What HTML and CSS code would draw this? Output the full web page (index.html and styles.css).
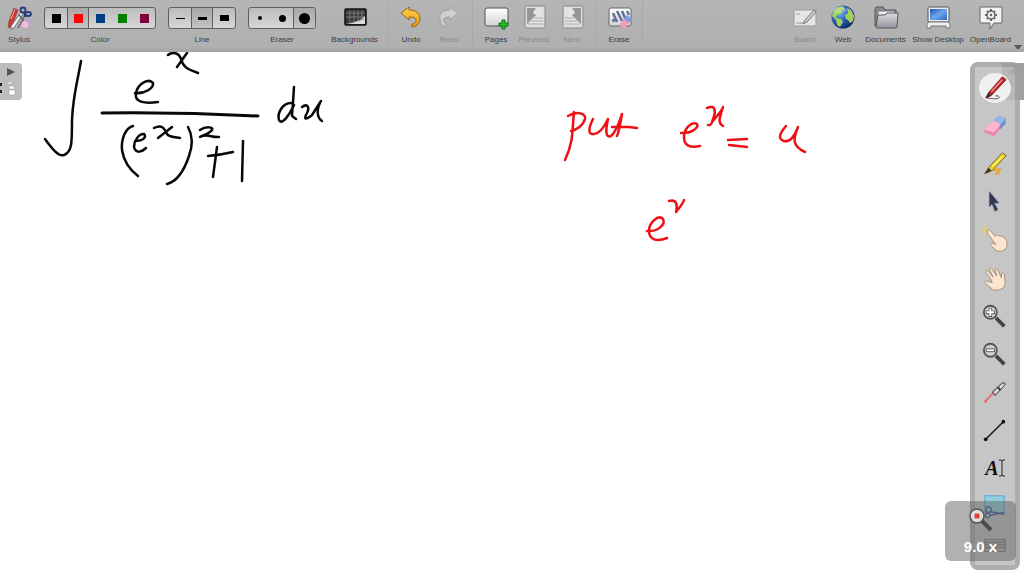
FILE: index.html
```html
<!DOCTYPE html>
<html lang="en">
<head>
<meta charset="utf-8">
<meta name="viewport" content="width=device-width, initial-scale=1">
<title>OpenBoard</title>
<link rel="stylesheet" href="styles.css">
</head>
<body>
<svg class="defs" width="0" height="0" aria-hidden="true">
  <defs>
    <linearGradient id="paper" x1="0" y1="0" x2="0" y2="1"><stop offset="0" stop-color="#fff"/><stop offset="1" stop-color="#d4d4d4"/></linearGradient>
    <linearGradient id="gold" x1="0" y1="0" x2="0" y2="1"><stop offset="0" stop-color="#ffd04a"/><stop offset="1" stop-color="#f09a10"/></linearGradient>
    <radialGradient id="globe" cx=".35" cy=".3" r=".75"><stop offset="0" stop-color="#7fb5f5"/><stop offset=".5" stop-color="#2a63bd"/><stop offset="1" stop-color="#0c2862"/></radialGradient>
    <linearGradient id="screen" x1="0" y1="0" x2="1" y2="1"><stop offset="0" stop-color="#1c55b4"/><stop offset=".5" stop-color="#6fa6ec"/><stop offset="1" stop-color="#2d68c4"/></linearGradient>
    <linearGradient id="folder" x1="0" y1="0" x2="0" y2="1"><stop offset="0" stop-color="#dcdde2"/><stop offset="1" stop-color="#94959d"/></linearGradient>
  </defs>
</svg>

<header class="toolbar">
  <div class="tools">
    <button class="tool" type="button">
      <svg class="icon" viewBox="0 0 28 28" aria-hidden="true">
        <path d="M17 19l4-5 5 3-4 7-5-1z" fill="#b9a0e0"/><path d="M17 19l2-3 5 3-2 5-5-1z" fill="#f2bdda"/>
        <path d="M4 17L9 4l4 2-5 13-3 5-2-1z" fill="#d03a33" stroke="#793030" stroke-width=".5"/>
        <path d="M6 15l4-10" stroke="#f2a7a0" stroke-width="1"/>
        <path d="M6 22L16 8l2 2L9 24l-3 1z" fill="#eee" stroke="#555" stroke-width=".8"/>
        <path d="M13 24L21 9M14 11l5 6" stroke="#666" stroke-width="1.500"/>
        <g fill="none" stroke="#263b80" stroke-width="1.800"><circle cx="18" cy="6" r="2.500"/><ellipse cx="23" cy="10" rx="3" ry="2"/><path d="M19 8l1 4 2-1"/></g>
      </svg>
      <span class="caption">Stylus</span>
    </button>

    <fieldset class="choice" aria-labelledby="color-caption">
      <div class="cells">
        <input class="cell black" type="radio" name="color" aria-label="Black">
        <input class="cell red" type="radio" name="color" aria-label="Red" checked>
        <input class="cell blue" type="radio" name="color" aria-label="Blue">
        <input class="cell green" type="radio" name="color" aria-label="Green">
        <input class="cell maroon" type="radio" name="color" aria-label="Maroon">
      </div>
      <span class="caption" id="color-caption">Color</span>
    </fieldset>

    <fieldset class="choice" aria-labelledby="line-caption">
      <div class="cells">
        <input class="cell line-thin" type="radio" name="line" aria-label="Thin">
        <input class="cell line-medium" type="radio" name="line" aria-label="Medium" checked>
        <input class="cell line-thick" type="radio" name="line" aria-label="Thick">
      </div>
      <span class="caption" id="line-caption">Line</span>
    </fieldset>

    <fieldset class="choice" aria-labelledby="eraser-caption">
      <div class="cells">
        <input class="cell dot-small" type="radio" name="eraser" aria-label="Small">
        <input class="cell dot-medium" type="radio" name="eraser" aria-label="Medium">
        <input class="cell dot-large" type="radio" name="eraser" aria-label="Large" checked>
      </div>
      <span class="caption" id="eraser-caption">Eraser</span>
    </fieldset>

    <div class="section">
      <button class="tool tool-mid" type="button">
        <svg class="icon" viewBox="0 0 28 28" aria-hidden="true">
          <rect x="4" y="5" width="21" height="16" rx="1" fill="#3a3a3a" stroke="#111" stroke-width="1.500"/>
          <path d="M5 9h19M5 13h19M9 6v14M13 6v14M17 6v14M21 6v14" stroke="#858585" stroke-width=".8"/>
          <path d="M5 20c8-1 14-3 19-8v8z" fill="#ddd"/><path d="M10 19l13-4" stroke="#888"/>
        </svg>
        <span class="caption">Backgrounds</span>
      </button>
    </div>

    <div class="section">
      <button class="tool" type="button">
        <svg class="icon" viewBox="0 0 28 28" aria-hidden="true">
          <path d="M4 9l8-6v3c8 0 11 4 11 9-1 5-4 8-8 8v-3c4 0 5-4 3-6-1-1-3-1-6-1v3z" fill="url(#gold)" stroke="#8a651b" stroke-width="1" stroke-linejoin="round"/>
        </svg>
        <span class="caption">Undo</span>
      </button>
      <button class="tool" type="button" disabled>
        <svg class="icon" viewBox="0 0 28 28" aria-hidden="true">
          <path d="M23 9l-8-6v3c-8 0-11 4-10 9 1 5 3 7 6 8v-3c-2-1-3-4-2-5 1-2 3-2 6-2v3z" fill="#d0d0d0" stroke="#a0a0a0" stroke-linejoin="round"/>
        </svg>
        <span class="caption">Redo</span>
      </button>
    </div>

    <div class="section">
      <button class="tool" type="button">
        <svg class="icon" viewBox="0 0 28 28" aria-hidden="true">
          <rect x="3" y="4" width="23" height="18" rx="2" fill="url(#paper)" stroke="#555"/>
          <path d="M20 16h3v3h3v3h-3v3h-3v-3h-3v-3h3z" fill="#28bd28" stroke="#08720c"/>
        </svg>
        <span class="caption">Pages</span>
      </button>
      <button class="tool" type="button" disabled>
        <svg class="icon" viewBox="0 0 28 28" aria-hidden="true">
          <rect x="5" y="2" width="20" height="22" rx="1.500" fill="#ddd" stroke="#888"/>
          <path d="M7 4h9l-3 5 3 2-9 9z" fill="#969696"/><path d="M16 4l-3 5 4 2L7 21h16V4z" fill="#e3e3e3"/><path d="M14 14h9M11 17h12M8 20h15" stroke="#aaa"/>
        </svg>
        <span class="caption">Previous</span>
      </button>
      <button class="tool" type="button" disabled>
        <svg class="icon" viewBox="0 0 28 28" aria-hidden="true">
          <rect x="5" y="2" width="20" height="22" rx="1.500" fill="#ddd" stroke="#888"/>
          <path d="M23 4h-9l3 5-3 2 9 9z" fill="#969696"/><path d="M14 4l3 5-4 2 10 10H7V4z" fill="#e3e3e3"/><path d="M7 14h9M7 17h12M7 20h15" stroke="#aaa"/>
        </svg>
        <span class="caption">Next</span>
      </button>
    </div>

    <div class="section">
      <button class="tool" type="button">
        <svg class="icon" viewBox="0 0 28 28" aria-hidden="true">
          <rect x="4" y="4" width="22" height="18" rx="2" fill="url(#paper)" stroke="#666"/>
          <path d="M8 9l4 9M12 7l5 10M17 7l3 7M22 7l2 4M8 15l1 3" stroke="#5f7196" stroke-width="2.500"/>
          <path d="M18 16l4-5 5 4-4 5z" fill="#7d9de0"/><path d="M15 20l4-5 5 4-4 5-4-1z" fill="#f39abc"/>
        </svg>
        <span class="caption">Erase</span>
      </button>
    </div>
  </div>

  <div class="tools tools-end">
    <button class="tool" type="button" disabled>
      <svg class="icon" viewBox="0 0 28 28" aria-hidden="true">
        <rect x="3" y="6" width="22" height="16" rx="1" fill="#e5e5e5" stroke="#999"/>
        <path d="M12 20l2-4 9-10 2 2-9 10z" fill="#ccc" stroke="#777"/><path d="M5 10h4M5 19h8" stroke="#999"/>
      </svg>
      <span class="caption">Board</span>
    </button>
    <button class="tool" type="button">
      <svg class="icon" viewBox="0 0 28 28" aria-hidden="true">
        <circle cx="14" cy="13" r="11.500" fill="url(#globe)"/>
        <path d="M4 8c2-3 5-5 9-6l3 3-4 2 0 3-4 1-1 3 5 1 2 3-3 5-3-2-1-5-4-4zM18 4l4 2 3 6-1 5-3 2-2-3-2-1-1-4 3-2z" fill="#a4cf5a"/>
        <ellipse cx="11" cy="6" rx="7" ry="3" fill="#fff" opacity=".25"/>
      </svg>
      <span class="caption">Web</span>
    </button>
    <button class="tool tool-mid" type="button">
      <svg class="icon" viewBox="0 0 28 28" aria-hidden="true">
        <path d="M3 22V5l1-2h7l2 3h11v15z" fill="#88898f" stroke="#55565b"/>
        <path d="M6 7h17v5H6z" fill="#eee" stroke="#777"/>
        <path d="M4 23l2-12h7l2-2h11l-1 14-1 1H5z" fill="url(#folder)" stroke="#55565b" stroke-linejoin="round"/>
      </svg>
      <span class="caption">Documents</span>
    </button>
    <button class="tool tool-wide" type="button">
      <svg class="icon" viewBox="0 0 28 28" aria-hidden="true">
        <rect x="4" y="3" width="21" height="15" rx="1" fill="#eee" stroke="#555"/>
        <rect x="6" y="5" width="17" height="11" fill="url(#screen)"/>
        <path d="M3 24v-4l2-2h19l2 2v4h-4v-2H7v2z" fill="#eee" stroke="#777"/>
      </svg>
      <span class="caption">Show Desktop</span>
    </button>
    <button class="tool tool-mid" type="button">
      <svg class="icon" viewBox="0 0 28 28" aria-hidden="true">
        <path d="M4 3h20q1 0 1 1v14q0 1-1 1h-7l-4 6v-6H4q-1 0-1-1V4q0-1 1-1z" fill="#f2f2f2" stroke="#666"/>
        <path d="M14 5v12M8 11h12M10 7l8 8M10 15l8-8" stroke="#666" stroke-width="2"/>
        <circle cx="14" cy="11" r="4" fill="#eee" stroke="#666" stroke-width="1.500"/><circle cx="14" cy="11" r="1.200" fill="#666"/>
      </svg>
      <span class="caption">OpenBoard</span>
    </button>
    <button class="more" type="button" aria-label="More"></button>
  </div>
</header>

<main class="board">
  <svg class="ink" viewBox="0 52 1024 524" preserveAspectRatio="xMinYMin meet" role="img" aria-label="Handwritten integral of e to the x over e to the x squared plus one, substitution e to the x equals u">
    <g class="pen-black">
      <path d="M81 61C77 84 73 96 72 120C72 143 72 152 64 155C58 157 51 147 45 139"/>
      <path d="M135 93C145 94 154 88 153 83C149 78 138 83 136 93C134 102 144 104 158 102"/>
      <path d="M168 55C173 51 179 53 181 59C183 67 187 69 198 73M187 53L177 67"/>
      <path class="bar" d="M102 113Q180 112 258 116"/>
      <path d="M133 126C125 128 121 140 122 150C124 163 130 170 138 176"/>
      <path d="M135 141C143 141 147 137 144 134C139 133 134 141 134 147C136 154 142 152 146 148"/>
      <path d="M154 128C162 124 164 128 167 134C169 137 173 137 180 138M172 127L158 138"/>
      <path d="M188 127C193 136 193 145 189 156C185 168 179 181 167 184"/>
      <path d="M200 130C206 126 214 127 212 130C209 134 204 135 200 137C207 133 212 138 219 137"/>
      <path d="M217 147Q215 162 213 177M208 156Q220 155 233 152M243 141L242 181"/>
      <path d="M291 103C282 103 277 114 279 120C282 126 290 114 294 105M294 87Q293 103 292 116L296 119"/>
      <path d="M302 107C307 103 310 107 307 113C303 120 306 120 312 115L321 101C316 110 317 118 322 121"/>
    </g>
    <g class="pen-red">
      <path d="M574 112C572 130 574 141 565 160M568 116C578 110 586 114 585 119C583 126 576 130 571 131"/>
      <path d="M593 119C588 129 588 135 594 134C602 133 607 121 608 119C605 132 606 138 611 136C617 131 621 117 622 114C620 126 619 132 617 136M612 127Q625 126 637 128"/>
      <path d="M681 133C692 134 699 127 697 124C691 121 684 129 684 137C684 146 690 148 700 146"/>
      <path d="M707 108C716 104 716 112 713 119C712 124 710 126 708 125M712 122C718 115 723 109 723 107C720 117 717 123 723 126"/>
      <path d="M728 140L747 139M729 145L747 147"/>
      <path d="M786 126C780 133 777 139 784 141C792 143 796 132 798 127C793 139 792 146 805 152"/>
      <path d="M647 231C657 232 666 225 663 219C658 214 649 223 649 231C649 240 657 242 667 238"/>
      <path d="M669 201C676 199 678 204 676 212C679 208 683 204 684 200"/>
    </g>
  </svg>

  <button class="drawer drawer-left" type="button" aria-label="Open page panel">
    <svg class="drawer-icon" viewBox="0 0 22 37" aria-hidden="true">
      <path d="M7 5l8 4-8 4z" fill="#555"/><path d="M0 20h2v3H0zM0 27h2v3H0z" fill="#222"/>
      <path d="M8 19h4v2H8zM9 23h5v3H9zM9 27h6v5H9z" fill="#fff" stroke="#999" stroke-width=".5"/>
    </svg>
  </button>
  <button class="drawer drawer-right" type="button" aria-label="Open library panel">
    <svg class="drawer-icon" viewBox="0 0 22 37" aria-hidden="true"><path d="M13 5L6 9l7 4z" fill="#555"/><path d="M6 18h4v3H6z" fill="#3b5d9a"/><path d="M6 24h4v4H6z" fill="#d0a938"/></svg>
  </button>

  <nav class="palette" aria-label="Drawing tools">
    <button class="pick pick-on" type="button" aria-label="Pen">
      <svg class="icon" viewBox="0 0 28 28" aria-hidden="true"><path d="M7 19L22 2l4 3-16 17-5 3z" fill="#c92328" stroke="#6b2020"/><path d="M10 18L22 5" stroke="#f69b96" stroke-width="1.500"/><path d="M3 25l4-6 3 3z" fill="#333"/><path d="M6 25c8 1 15 1 12-2-2-2-5 0-2 0" fill="none" stroke="#555"/></svg>
    </button>
    <button class="pick" type="button" aria-label="Eraser">
      <svg class="icon" viewBox="0 0 28 28" aria-hidden="true"><path d="M12 8l6-5 8 3-1 6-6 6-7-5z" fill="#6c8fd0"/><path d="M12 8l6-5 8 3-6 6z" fill="#93b5e9"/><path d="M2 18l10-10 8 4-1 6-6 7-10-4z" fill="#ea83b0"/><path d="M2 18l10-10 8 4-7 9z" fill="#ffb4d0"/></svg>
    </button>
    <button class="pick" type="button" aria-label="Highlighter">
      <svg class="icon" viewBox="0 0 28 28" aria-hidden="true"><path d="M8 20h11l-3 4h3" fill="none" stroke="#e3aa42" stroke-width="3"/><path d="M7 18L22 2l4 3-15 16-6 3z" fill="#ebce23" stroke="#74631c"/><path d="M11 17L23 5" stroke="#fff171" stroke-width="1.500"/><path d="M2 25l5-7 3 3z" fill="#333"/></svg>
    </button>
    <button class="pick" type="button" aria-label="Select">
      <svg class="icon" viewBox="0 0 28 28" aria-hidden="true"><path d="M8 3l10 12h-5l4 7-3 2-3-8-3 3z" fill="#30384f" stroke="#586078"/></svg>
    </button>
    <button class="pick" type="button" aria-label="Interact">
      <svg class="icon" viewBox="0 0 28 28" aria-hidden="true"><path d="M3-3v11M-3 3h11M-1-1l8 8M7-1l-8 8" stroke="#dfd176"/><path d="M6 4c2-2 3 0 8 6 2-2 4-1 5 0 2-1 4 0 5 2 3 0 4 9 2 11l-4 3h-6c-2-3-8-6-7-8 1-2 4 0 6 1L6 7q-1-2 0-3z" fill="#fbe5cf" stroke="#a18d77"/></svg>
    </button>
    <button class="pick" type="button" aria-label="Scroll page">
      <svg class="icon" viewBox="0 0 28 28" aria-hidden="true"><path d="M9 14L4 8q0-3 3-1l5 6-4-8q1-3 3 0l5 7-2-7q1-2 3 0l4 9 0-5q2-2 3 1l1 10-2 5-5 2h-6l-8-7q-2-3 1-3l6 2z" fill="#fbe5cf" stroke="#a18d77"/></svg>
    </button>
    <button class="pick" type="button" aria-label="Zoom in">
      <svg class="icon" viewBox="0 0 28 28" aria-hidden="true"><path d="M15 16l9 9" stroke="#444" stroke-width="4"/><circle cx="9" cy="10" r="7" fill="#e0e0e0" stroke="#555" stroke-width="2"/><path d="M9 5v10M4 10h10" stroke="#555" stroke-width="4"/><path d="M9 6v8M5 10h8" stroke="#fff" stroke-width="2"/></svg>
    </button>
    <button class="pick" type="button" aria-label="Zoom out">
      <svg class="icon" viewBox="0 0 28 28" aria-hidden="true"><path d="M15 16l9 9" stroke="#444" stroke-width="4"/><circle cx="9" cy="10" r="7" fill="#d0d0d0" stroke="#555" stroke-width="2"/><path d="M4 10h10" stroke="#555" stroke-width="4"/><path d="M5 10h8" stroke="#fff" stroke-width="2"/></svg>
    </button>
    <button class="pick" type="button" aria-label="Laser pointer">
      <svg class="icon" viewBox="0 0 28 28" aria-hidden="true"><path d="M3 25l9-10" stroke="#e66d69" stroke-width="2"/><circle cx="4" cy="24" r="1.500" fill="#e66d69"/><path d="M11 14L22 4q3-1 3 2L14 18z" fill="#aaa" stroke="#444"/><path d="M14 15l9-9" stroke="#eee" stroke-width="1.500"/><path d="M17 9l3 3" stroke="#333" stroke-width="2"/></svg>
    </button>
    <button class="pick" type="button" aria-label="Line">
      <svg class="icon" viewBox="0 0 28 28" aria-hidden="true"><path d="M4 24L23 5" stroke="#111" stroke-width="1.500"/><circle cx="4" cy="24" r="2" fill="#111"/><circle cx="23" cy="5" r="2" fill="#111"/></svg>
    </button>
    <button class="pick" type="button" aria-label="Write text">
      <span class="letter">A</span><svg class="caret" viewBox="0 0 6 18" aria-hidden="true"><path d="M0 1h2l1 1 1-1h2M3 2v14M0 17h2l1-1 1 1h2" fill="none" stroke="#222"/></svg>
    </button>
    <button class="pick" type="button" aria-label="Capture">
      <svg class="icon" viewBox="0 0 28 28" aria-hidden="true"><rect x="3" y="3" width="21" height="18" fill="#91cfdd" stroke="#258dd2" stroke-dasharray="2 1"/><g fill="none" stroke="#385d9b" stroke-width="1.500"><circle cx="7" cy="18" r="3"/><circle cx="6" cy="24" r="2.500"/><path d="M9 20l15 3M9 24l15-3"/></g></svg>
    </button>
    <button class="pick" type="button" aria-label="Virtual keyboard">
      <svg class="icon" viewBox="0 0 28 28" aria-hidden="true"><rect x="3" y="9" width="22" height="13" fill="#b8b8b8" stroke="#777"/><path d="M3 12h22M3 15h22M3 18h22" stroke="#666"/></svg>
    </button>
  </nav>

  <output class="zoom">
    <svg class="icon" viewBox="0 0 28 28" aria-hidden="true"><path d="M15 16l9 9" stroke="#4b4b4b" stroke-width="4"/><circle cx="10" cy="11" r="7" fill="#ddd" stroke="#555" stroke-width="1.500"/><path d="M8 9l4 4M12 9l-4 4" stroke="#e83b34" stroke-width="2.500"/></svg>
    <span>9.0 x</span>
  </output>
</main>
</body>
</html>
```

FILE: styles.css
```css
* {
  box-sizing: border-box;
}

body {
  display: flex;
  flex-direction: column;
  min-height: 100vh;
  margin: 0;
  background: #fff;
  color: #3c3c3c;
  font: 8px/12px "Liberation Sans", Arial, sans-serif;
}

button {
  margin: 0;
  padding: 0;
  border: 0;
  background: none;
  color: inherit;
  font: inherit;
}

.defs {
  position: absolute;
}

.toolbar {
  display: flex;
  justify-content: space-between;
  height: 52px;
  background: linear-gradient(#b5b5b5, #b0b0b0 90%, #a3a3a3);
}

.tools {
  display: flex;
}

.tools-end {
  padding-right: 2px;
}

.tool {
  display: flex;
  flex-direction: column;
  align-items: center;
  width: 38px;
  padding-top: 4px;
}

.tool-mid {
  width: 47px;
}

.tool-wide {
  width: 58px;
}

.tool:disabled {
  color: #898989;
}

.icon {
  display: block;
  flex: none;
  width: 28px;
  height: 28px;
  overflow: visible;
}

.caption {
  margin-top: 2px;
  white-space: nowrap;
}

.choice {
  display: flex;
  flex-direction: column;
  align-items: center;
  min-width: 0;
  margin: 0 6px;
  padding: 7px 0 0;
  border: 0;
}

.choice .caption {
  margin-top: 5px;
}

.cells {
  display: flex;
  overflow: hidden;
  border: 1px solid #5f5f5f;
  border-radius: 3px;
  background: linear-gradient(#bcbcbc, #d6d6d6);
}

.cell {
  display: grid;
  place-items: center;
  width: 22px;
  height: 20px;
  margin: 0;
  appearance: none;
}

.cell:checked {
  border: solid #5f5f5f;
  border-width: 0 1px;
  background: linear-gradient(#a8a8a8, #c2c2c2);
}

.cell:last-child:checked {
  border-right-width: 0;
}

.cell::before {
  content: "";
  width: 9px;
  height: 9px;
  background: #000;
}

.cell.red::before {
  background: #f00;
}

.cell.blue::before {
  background: #004080;
}

.cell.green::before {
  background: #008000;
}

.cell.maroon::before {
  background: #800040;
}

.line-thin::before {
  height: 1px;
}

.line-medium::before {
  height: 3px;
}

.line-thick::before {
  height: 6px;
}

.dot-small::before {
  width: 4px;
  height: 4px;
  border-radius: 50%;
}

.dot-medium::before {
  width: 7px;
  height: 7px;
  border-radius: 50%;
}

.dot-large::before {
  width: 11px;
  height: 11px;
  border-radius: 50%;
}

.section {
  display: flex;
  padding: 0 4px;
  border-right: 1px solid #a9a9a9;
}

.section:first-of-type {
  padding: 0 9px;
}

.more {
  align-self: flex-end;
  width: 8px;
  height: 10px;
}

.more::before {
  content: "";
  display: block;
  border: solid transparent;
  border-width: 4px 3px 0;
  border-top-color: #555;
}

.board {
  position: relative;
  flex: 1;
  overflow: hidden;
}

.ink {
  display: block;
  width: 100%;
}

.ink path {
  fill: none;
  stroke-width: 2.5;
  stroke-linecap: round;
  stroke-linejoin: round;
}

.pen-black {
  stroke: #080808;
}

.pen-red {
  stroke: #ee1013;
}

.ink .bar {
  stroke-width: 3;
}

.drawer {
  position: absolute;
  top: 11px;
  width: 22px;
  height: 37px;
  background: #bdbdbd;
}

.drawer-icon {
  display: block;
}

.drawer-left {
  left: 0;
  border-radius: 0 4px 4px 0;
}

.drawer-right {
  right: 0;
  background: #a0a0a0;
}

.palette {
  position: absolute;
  top: 10px;
  right: 4px;
  display: flex;
  flex-direction: column;
  align-items: center;
  width: 50px;
  padding: 2px 0;
  border: 5px solid rgb(160 160 160 / 85%);
  border-radius: 8px;
  background: rgb(188 188 188 / 85%);
  background-clip: padding-box;
}

.pick {
  display: flex;
  justify-content: center;
  align-items: center;
  width: 32px;
  height: 38px;
}

.pick .icon {
  width: 26px;
  height: 26px;
}

.pick-on {
  height: 30px;
  margin: 4px 0;
  border-radius: 50%;
  background: #f0f0f0;
}

.letter {
  color: #111;
  font: italic bold 20px/20px "Liberation Serif", serif;
}

.caret {
  width: 6px;
  height: 18px;
}

.zoom {
  position: absolute;
  right: 8px;
  bottom: 15px;
  display: flex;
  flex-direction: column;
  align-items: center;
  width: 71px;
  padding: 4px 0 0;
  border-radius: 6px;
  background: rgb(100 100 100 / 50%);
  color: #fff;
  font: bold 15px/28px "Liberation Sans", sans-serif;
}
```
